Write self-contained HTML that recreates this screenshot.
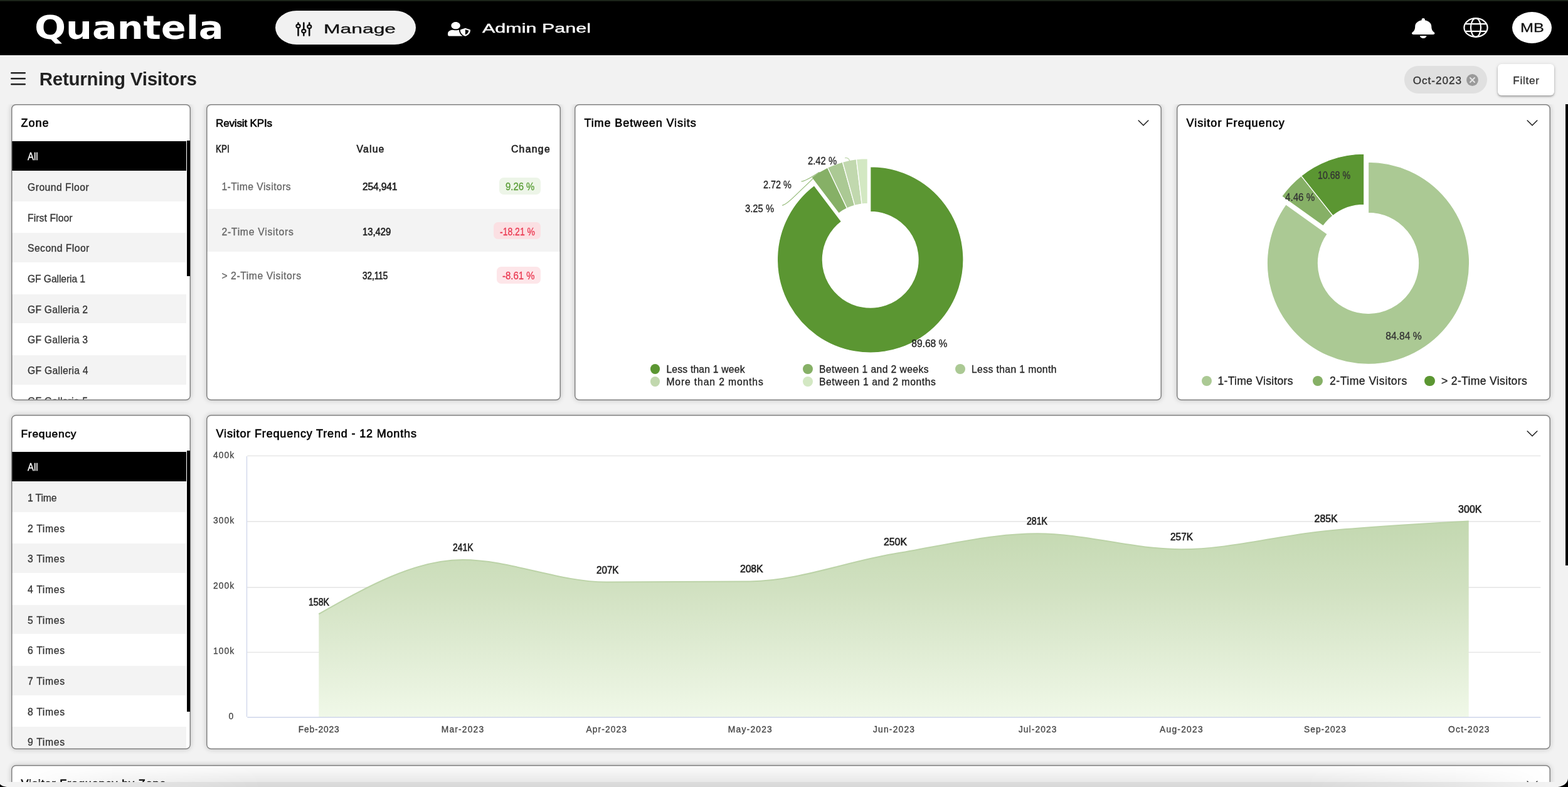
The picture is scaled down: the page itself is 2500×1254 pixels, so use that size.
<!DOCTYPE html>
<html lang="en">
<head>
<meta charset="utf-8">
<title>Returning Visitors</title>
<style>
html,body{margin:0;padding:0;overflow:hidden}
body{width:2500px;height:1254px;overflow:hidden;background:#f2f2f2;font-family:"Liberation Sans",sans-serif;color:#222;position:relative}
span,h1,h2,li,th,td,a,b,i{margin:0;padding:0}
.a,header span,header a,main h1,main h2,main span,main b,.toolbar svg{position:absolute;white-space:pre;line-height:1;margin:0;display:block}
header{position:absolute;left:0;top:0;width:2500px;height:88px;background:#000;border-top:2px solid #1b2419;box-sizing:border-box}
header svg,main svg{position:absolute;overflow:visible}
main{position:absolute;left:0;top:0;width:2500px;height:1254px;overflow:hidden}
header,main,.panel,.toolbar{will-change:transform}
.pill{position:absolute;left:439px;top:17px;width:224px;height:54px;background:#f1f1f1;border-radius:34px/27px}
.avatar{position:absolute;left:2411px;top:19px;width:63px;height:50px;background:#fff;border-radius:50%}
.chip{position:absolute;left:2239px;top:105px;width:132px;height:44px;background:#e0e0e0;border-radius:22px}
.btn{position:absolute;left:2388px;top:102px;width:90px;height:50px;background:#fff;border-radius:6px;box-shadow:0 2px 3px rgba(0,0,0,.28),0 1px 6px rgba(0,0,0,.12)}
.panel{position:absolute;background:#fff;border-radius:7.5px;box-shadow:0 0 9px rgba(0,0,0,.2);overflow:hidden}
.ring{position:absolute;display:block;border-radius:7.5px;box-shadow:inset 0 0 0 1.5px #808080;pointer-events:none}
.toolbar{position:absolute;left:0;top:88px;width:2500px;height:78px;background:#f2f2f2;z-index:2}
header{z-index:3}
.panel h2{font-weight:700}
ul{list-style:none;margin:0;padding:0;position:absolute;left:0;width:279.3px}
ul li{display:block;position:relative;height:46.7px;margin-bottom:2px;background:#fff}
ul li:nth-child(even){background:#f3f3f3}
ul li.sel{background:#000}
ul li span{position:absolute;white-space:pre;line-height:1}
.thumb{position:absolute;background:#000;width:5px}
.row{position:absolute;left:0;width:565px;height:69px}
.badge{position:absolute;border-radius:7px}
.dot{position:absolute;border-radius:50%}
.shade{background:linear-gradient(to bottom,rgba(0,0,0,0) 0,rgba(0,0,0,.015) 9px,rgba(0,0,0,.09) 34px,rgba(0,0,0,.105) 42px);-webkit-mask-image:linear-gradient(to right,transparent 30px,rgba(0,0,0,.5) 180px,#000 420px,#000 2080px,rgba(0,0,0,.5) 2320px,transparent 2470px);mask-image:linear-gradient(to right,transparent 30px,rgba(0,0,0,.5) 180px,#000 420px,#000 2080px,rgba(0,0,0,.5) 2320px,transparent 2470px)}
</style>
</head>
<body>
<header>
<span class="logo" style="left:54.6px;top:16.8px;font-size:51px;font-weight:700;font-family:'DejaVu Sans','Liberation Sans',sans-serif;color:#fff;transform:scaleX(1.1544);transform-origin:0 0;">Quantela</span>
<a class="pill" style="top:15px"></a>
<svg style="left:471px;top:33px" width="27" height="23" viewBox="0 0 27 23">
<g stroke="#111" stroke-width="2.6" stroke-linecap="round" fill="none">
<path d="M4.5 1.5V3.6M4.5 9.4V21.5M13.3 1.5V11.6M13.3 17.4V21.5M22.2 1.5V4.6M22.2 10.4V21.5"/>
<ellipse cx="4.5" cy="6.5" rx="3.1" ry="2.6" stroke-width="2.2"/>
<ellipse cx="13.3" cy="14.5" rx="3.1" ry="2.6" stroke-width="2.2"/>
<ellipse cx="22.2" cy="7.5" rx="3.1" ry="2.6" stroke-width="2.2"/>
</g></svg>
<span style="left:515.9px;top:33.6px;font-size:20.5px;color:#111;transform:scaleX(1.5534);transform-origin:0 0;-webkit-text-stroke:0.3px;">Manage</span>
<svg style="left:714px;top:33px" width="36" height="22.5" viewBox="0 0 640 512" preserveAspectRatio="none">
<path fill="#fff" d="M622.3 271.1l-115.2-45c-4.1-1.6-12.6-3.7-22.2 0l-115.2 45c-10.7 4.2-17.7 14-17.7 24.9 0 111.6 68.7 188.8 132.9 213.9 9.6 3.7 18 1.6 22.2 0C558.4 489.9 640 420.5 640 296c0-10.9-7-20.7-17.7-24.9zM496 462.4V273.3l95.5 37.3c-5.6 87.1-60.9 135.4-95.5 151.8zM224 256c70.7 0 128-57.3 128-128S294.7 0 224 0 96 57.3 96 128s57.3 128 128 128zm96 40c0-2.5.8-4.8 1.1-7.2-2.5-.1-4.9-.8-7.5-.8h-16.7c-22.2 10.2-46.9 16-72.9 16s-50.6-5.8-72.9-16h-16.7C60.2 288 0 348.2 0 422.4V464c0 26.5 21.5 48 48 48h352c6.8 0 13.3-1.5 19.2-4-54-42.9-99.2-116.7-99.2-212z"/></svg>
<span style="left:769.0px;top:33.1px;font-size:20.5px;color:#fff;transform:scaleX(1.4884);transform-origin:0 0;-webkit-text-stroke:0.35px #fff;">Admin Panel</span>
<svg style="left:2250.5px;top:27px" width="36.5" height="32" viewBox="0 0 448 512" preserveAspectRatio="none">
<path fill="#fff" d="M224 512c35.32 0 63.97-28.65 63.97-64H160.03c0 35.35 28.65 64 63.97 64zm215.39-149.71c-19.32-20.76-55.47-51.99-55.47-154.29 0-77.7-54.48-139.9-127.94-155.16V32c0-17.67-14.32-32-31.98-32s-31.98 14.33-31.98 32v20.84C118.56 68.1 64.08 130.3 64.08 208c0 102.3-36.15 133.53-55.47 154.29-6 6.45-8.66 14.16-8.61 21.71.11 16.4 12.98 32 32.1 32h383.8c19.12 0 32-15.6 32.1-32 .05-7.55-2.61-15.27-8.61-21.71z"/></svg>
<svg style="left:2332.5px;top:25.5px" width="40" height="32" viewBox="0 0 40 32">
<g fill="none" stroke="#fff" stroke-width="2.2">
<ellipse cx="20" cy="16" rx="18.6" ry="14.8"/>
<ellipse cx="20" cy="16" rx="8" ry="14.8"/>
<path d="M3.5 10.2H36.5M3.5 21.8H36.5"/>
</g></svg>
<a class="avatar" style="top:17px"></a>
<span style="left:2423.8px;top:31.0px;font-size:21px;color:#111;transform:scaleX(1.2000);transform-origin:0 0;-webkit-text-stroke:0.3px;">MB</span>
</header>
<main>
<div class="toolbar">
<svg style="left:17px;top:27px" width="24" height="21" viewBox="0 0 24 21"><path d="M1.2 1.2H22.8M1.2 10.2H22.8M1.2 19.2H22.8" stroke="#222" stroke-width="2.4" stroke-linecap="round" fill="none"/></svg>
<h1 style="left:62.8px;top:23.0px;font-size:29.5px;font-weight:700;color:#222;letter-spacing:-0.245px;">Returning Visitors</h1>
<div class="chip" style="top:17px"></div>
<span style="left:2252.7px;top:32.0px;font-size:17.2px;color:#333;letter-spacing:0.942px;-webkit-text-stroke:0.3px;">Oct-2023</span>
<svg style="left:2338px;top:29.700000000000003px" width="19" height="19" viewBox="0 0 19 19"><circle cx="9.5" cy="9.5" r="9.4" fill="#9a9a9a"/><path d="M6 6L13 13M13 6L6 13" stroke="#e4e4e4" stroke-width="2" stroke-linecap="round"/></svg>
<div class="btn" style="top:14px"></div>
<span style="left:2412.3px;top:32.0px;font-size:17.2px;color:#333;letter-spacing:0.679px;-webkit-text-stroke:0.3px;">Filter</span>
</div>
<section class="panel" id="zone" style="left:18px;top:166px;width:286px;height:472px">
<h2 style="left:15.5px;top:21.2px;font-size:18px;font-weight:400;color:#000;letter-spacing:0.990px;-webkit-text-stroke:0.6px;">Zone</h2>
<ul style="top:59.3px">
<li class="sel"><span style="left:26.0px;top:16.9px;font-size:15.7px;color:#fff;transform:scaleX(0.9462);transform-origin:0 0;-webkit-text-stroke:0.3px;">All</span></li>
<li><span style="left:26.0px;top:16.9px;font-size:15.7px;color:#333;letter-spacing:0.478px;-webkit-text-stroke:0.3px;">Ground Floor</span></li>
<li><span style="left:26.0px;top:16.9px;font-size:15.7px;color:#333;letter-spacing:0.091px;-webkit-text-stroke:0.3px;">First Floor</span></li>
<li><span style="left:26.0px;top:16.9px;font-size:15.7px;color:#333;letter-spacing:0.453px;-webkit-text-stroke:0.3px;">Second Floor</span></li>
<li><span style="left:26.0px;top:16.9px;font-size:15.7px;color:#333;letter-spacing:-0.108px;-webkit-text-stroke:0.3px;">GF Galleria 1</span></li>
<li><span style="left:26.0px;top:16.9px;font-size:15.7px;color:#333;letter-spacing:0.225px;-webkit-text-stroke:0.3px;">GF Galleria 2</span></li>
<li><span style="left:26.0px;top:16.9px;font-size:15.7px;color:#333;letter-spacing:0.225px;-webkit-text-stroke:0.3px;">GF Galleria 3</span></li>
<li><span style="left:26.0px;top:16.9px;font-size:15.7px;color:#333;letter-spacing:0.267px;-webkit-text-stroke:0.3px;">GF Galleria 4</span></li>
<li><span style="left:26.0px;top:16.9px;font-size:15.7px;color:#333;letter-spacing:0.225px;-webkit-text-stroke:0.3px;">GF Galleria 5</span></li>
</ul>
</section>
<i class="ring" style="left:18px;top:166px;width:286px;height:472px"></i>
<div class="thumb" style="left:298px;top:223.7px;height:216.2px"></div>
<section class="panel" id="kpis" style="left:329px;top:166px;width:565px;height:472px">
<h2 style="left:15.0px;top:22.0px;font-size:17px;font-weight:400;color:#000;letter-spacing:-0.149px;-webkit-text-stroke:0.6px;">Revisit KPIs</h2>
<span class="th" style="left:14.9px;top:63.9px;font-size:15.7px;color:#222;transform:scaleX(0.8578);transform-origin:0 0;-webkit-text-stroke:0.6px;">KPI</span>
<span class="th" style="left:239.6px;top:63.9px;font-size:15.7px;color:#222;letter-spacing:1.183px;-webkit-text-stroke:0.6px;">Value</span>
<span class="th" style="left:485.9px;top:63.9px;font-size:15.7px;color:#222;letter-spacing:1.369px;-webkit-text-stroke:0.6px;">Change</span>
<span style="left:24.4px;top:123.9px;font-size:15.7px;color:#666;letter-spacing:0.469px;-webkit-text-stroke:0.3px;">1-Time Visitors</span>
<span style="left:249.1px;top:123.9px;font-size:15.7px;color:#222;letter-spacing:-0.236px;-webkit-text-stroke:0.6px;">254,941</span>
<div class="badge" style="left:466.9px;top:116.6px;width:66.4px;height:27.3px;background:#edf5e8"></div>
<span style="left:477.2px;top:123.9px;font-size:15.7px;color:#5b9e38;transform:scaleX(0.9479);transform-origin:0 0;-webkit-text-stroke:0.3px;">9.26 %</span>
<div class="row" style="top:166.7px;height:68.6px;background:#f3f3f3"></div>
<span style="left:24.4px;top:195.5px;font-size:15.7px;color:#666;letter-spacing:0.762px;-webkit-text-stroke:0.3px;">2-Time Visitors</span>
<span style="left:249.1px;top:195.5px;font-size:15.7px;color:#222;transform:scaleX(0.9399);transform-origin:0 0;-webkit-text-stroke:0.6px;">13,429</span>
<div class="badge" style="left:458.2px;top:188.2px;width:75.1px;height:27.3px;background:#fbe0e3"></div>
<span style="left:467.5px;top:195.5px;font-size:15.7px;color:#ea3a52;transform:scaleX(0.8918);transform-origin:0 0;-webkit-text-stroke:0.3px;">-18.21 %</span>
<span style="left:24.4px;top:266.2px;font-size:15.7px;color:#666;letter-spacing:0.584px;-webkit-text-stroke:0.3px;">&gt; 2-Time Visitors</span>
<span style="left:249.1px;top:266.2px;font-size:15.7px;color:#222;transform:scaleX(0.8606);transform-origin:0 0;-webkit-text-stroke:0.6px;">32,115</span>
<div class="badge" style="left:462.8px;top:258.9px;width:70.5px;height:27.3px;background:#fde6e9"></div>
<span style="left:472.0px;top:266.2px;font-size:15.7px;color:#ea3a52;transform:scaleX(0.9523);transform-origin:0 0;-webkit-text-stroke:0.3px;">-8.61 %</span>
</section>
<i class="ring" style="left:329px;top:166px;width:565px;height:472px"></i>
<section class="panel" id="tbv" style="left:916px;top:166px;width:936px;height:472px">
<h2 style="left:15.5px;top:21.0px;font-size:18px;font-weight:400;color:#000;letter-spacing:0.897px;-webkit-text-stroke:0.6px;">Time Between Visits</h2>
<svg style="left:898px;top:25px" width="18" height="10" viewBox="0 0 18 10"><path d="M1.2 1L9 8.8L16.8 1" stroke="#222" stroke-width="1.6" fill="none" stroke-linecap="round" stroke-linejoin="round"/></svg>
<svg style="left:0;top:0" width="936" height="472" viewBox="0 0 936 472">
<path d="M471.70,99.50A148.3,148.3 0 1 1 382.14,129.60L425.62,186.99A76.3,76.3 0 1 0 471.70,171.50Z" fill="#5b9632" stroke="#fff" stroke-width="1.3" stroke-linejoin="round"/>
<path d="M377.77,116.61A148.3,148.3 0 0 1 403.60,100.91L434.55,165.92A76.3,76.3 0 0 0 421.26,174.00Z" fill="#86b066" stroke="#fff" stroke-width="1.3" stroke-linejoin="round"/>
<path d="M403.60,100.91A148.3,148.3 0 0 1 427.31,92.02L446.74,161.35A76.3,76.3 0 0 0 434.55,165.92Z" fill="#abc994" stroke="#fff" stroke-width="1.3" stroke-linejoin="round"/>
<path d="M427.31,92.02A148.3,148.3 0 0 1 449.40,87.60L458.11,159.07A76.3,76.3 0 0 0 446.74,161.35Z" fill="#c1d8ae" stroke="#fff" stroke-width="1.3" stroke-linejoin="round"/>
<path d="M449.40,87.60A148.3,148.3 0 0 1 467.34,86.51L467.34,158.51A76.3,76.3 0 0 0 458.11,159.07Z" fill="#d3e8c3" stroke="#fff" stroke-width="1.3" stroke-linejoin="round"/>
<g fill="none" stroke="#86b066" stroke-width="1.1" stroke-opacity=".9"><path d="M331.2,161.4Q338.0,159.5 352.0,145.6L380.4,118.4"/><path d="M361.4,123.0Q367.0,123.5 390.4,108.2"/><path d="M431.2,85.6Q437.0,85.0 438.6,90.0" stroke="#abc994"/></g>
</svg>
<span style="left:371.9px;top:83.1px;font-size:15.7px;color:#222;transform:scaleX(0.9438);transform-origin:0 0;-webkit-text-stroke:0.3px;">2.42 %</span>
<span style="left:300.8px;top:120.7px;font-size:15.7px;color:#222;transform:scaleX(0.9193);transform-origin:0 0;-webkit-text-stroke:0.3px;">2.72 %</span>
<span style="left:271.5px;top:158.5px;font-size:15.7px;color:#222;transform:scaleX(0.9438);transform-origin:0 0;-webkit-text-stroke:0.3px;">3.25 %</span>
<span style="left:537.2px;top:373.9px;font-size:15.7px;color:#222;letter-spacing:-0.030px;-webkit-text-stroke:0.3px;">89.68 %</span>
<i class="dot" style="left:120.5px;top:414.0px;width:15.8px;height:15.8px;background:#5b9632"></i>
<span style="left:146.4px;top:415.1px;font-size:15.7px;color:#222;letter-spacing:0.200px;-webkit-text-stroke:0.3px;">Less than 1 week</span>
<i class="dot" style="left:364.0px;top:414.0px;width:15.8px;height:15.8px;background:#86b066"></i>
<span style="left:389.9px;top:415.1px;font-size:15.7px;color:#222;letter-spacing:0.401px;-webkit-text-stroke:0.3px;">Between 1 and 2 weeks</span>
<i class="dot" style="left:607.0px;top:414.0px;width:15.8px;height:15.8px;background:#abc994"></i>
<span style="left:632.9px;top:415.1px;font-size:15.7px;color:#222;letter-spacing:0.408px;-webkit-text-stroke:0.3px;">Less than 1 month</span>
<i class="dot" style="left:120.5px;top:433.9px;width:15.8px;height:15.8px;background:#c1d8ae"></i>
<span style="left:146.4px;top:435.0px;font-size:15.7px;color:#222;letter-spacing:0.875px;-webkit-text-stroke:0.3px;">More than 2 months</span>
<i class="dot" style="left:364.0px;top:433.9px;width:15.8px;height:15.8px;background:#d3e8c3"></i>
<span style="left:389.9px;top:435.0px;font-size:15.7px;color:#222;letter-spacing:0.592px;-webkit-text-stroke:0.3px;">Between 1 and 2 months</span>
</section>
<i class="ring" style="left:916px;top:166px;width:936px;height:472px"></i>
<section class="panel" id="vf" style="left:1876px;top:166px;width:596px;height:472px">
<h2 style="left:15.5px;top:21.0px;font-size:18px;font-weight:400;color:#000;letter-spacing:1.035px;-webkit-text-stroke:0.6px;">Visitor Frequency</h2>
<svg style="left:557.5px;top:25px" width="18" height="10" viewBox="0 0 18 10"><path d="M1.2 1L9 8.8L16.8 1" stroke="#222" stroke-width="1.6" fill="none" stroke-linecap="round" stroke-linejoin="round"/></svg>
<svg style="left:0;top:0" width="596" height="472" viewBox="0 0 596 472">
<path d="M305.50,92.10A161.2,161.2 0 1 1 174.24,159.72L240.36,206.86A80,80 0 1 0 305.50,173.30Z" fill="#abc994" stroke="#fff" stroke-width="1.3" stroke-linejoin="round"/>
<path d="M167.60,146.83A161.2,161.2 0 0 1 198.61,114.18L249.11,177.76A80,80 0 0 0 233.72,193.97Z" fill="#86b066" stroke="#fff" stroke-width="1.3" stroke-linejoin="round"/>
<path d="M198.61,114.18A161.2,161.2 0 0 1 298.86,79.21L298.86,160.41A80,80 0 0 0 249.11,177.76Z" fill="#5b9632" stroke="#fff" stroke-width="1.3" stroke-linejoin="round"/>
</svg>
<span style="left:224.6px;top:105.7px;font-size:15.7px;color:#333;transform:scaleX(0.9031);transform-origin:0 0;-webkit-text-stroke:0.3px;">10.68 %</span>
<span style="left:172.6px;top:141.3px;font-size:15.7px;color:#333;transform:scaleX(0.9684);transform-origin:0 0;-webkit-text-stroke:0.3px;">4.46 %</span>
<span style="left:333.2px;top:361.7px;font-size:15.7px;color:#333;letter-spacing:-0.013px;-webkit-text-stroke:0.3px;">84.84 %</span>
<i class="dot" style="left:39.5px;top:432.5px;width:16.8px;height:16.8px;background:#abc994"></i>
<span style="left:65.5px;top:432.7px;font-size:17.6px;color:#222;letter-spacing:0.261px;-webkit-text-stroke:0.3px;">1-Time Visitors</span>
<i class="dot" style="left:216.6px;top:432.5px;width:16.8px;height:16.8px;background:#86b066"></i>
<span style="left:244.1px;top:432.7px;font-size:17.6px;color:#222;letter-spacing:0.483px;-webkit-text-stroke:0.3px;">2-Time Visitors</span>
<i class="dot" style="left:394.8px;top:432.5px;width:16.8px;height:16.8px;background:#5b9632"></i>
<span style="left:422.0px;top:432.7px;font-size:17.6px;color:#222;letter-spacing:0.325px;-webkit-text-stroke:0.3px;">&gt; 2-Time Visitors</span>
</section>
<i class="ring" style="left:1876px;top:166px;width:596px;height:472px"></i>
<section class="panel" id="freq" style="left:18px;top:661px;width:286px;height:533px">
<h2 style="left:15.5px;top:21.8px;font-size:17.3px;font-weight:400;color:#000;letter-spacing:0.793px;-webkit-text-stroke:0.6px;">Frequency</h2>
<ul style="top:59.3px">
<li class="sel"><span style="left:26.0px;top:16.9px;font-size:15.7px;color:#fff;transform:scaleX(0.9462);transform-origin:0 0;-webkit-text-stroke:0.3px;">All</span></li>
<li><span style="left:26.0px;top:16.9px;font-size:15.7px;color:#333;letter-spacing:-0.116px;-webkit-text-stroke:0.3px;">1 Time</span></li>
<li><span style="left:26.0px;top:16.9px;font-size:15.7px;color:#333;letter-spacing:0.680px;-webkit-text-stroke:0.3px;">2 Times</span></li>
<li><span style="left:26.0px;top:16.9px;font-size:15.7px;color:#333;letter-spacing:0.680px;-webkit-text-stroke:0.3px;">3 Times</span></li>
<li><span style="left:26.0px;top:16.9px;font-size:15.7px;color:#333;letter-spacing:0.680px;-webkit-text-stroke:0.3px;">4 Times</span></li>
<li><span style="left:26.0px;top:16.9px;font-size:15.7px;color:#333;letter-spacing:0.680px;-webkit-text-stroke:0.3px;">5 Times</span></li>
<li><span style="left:26.0px;top:16.9px;font-size:15.7px;color:#333;letter-spacing:0.680px;-webkit-text-stroke:0.3px;">6 Times</span></li>
<li><span style="left:26.0px;top:16.9px;font-size:15.7px;color:#333;letter-spacing:0.680px;-webkit-text-stroke:0.3px;">7 Times</span></li>
<li><span style="left:26.0px;top:16.9px;font-size:15.7px;color:#333;letter-spacing:0.680px;-webkit-text-stroke:0.3px;">8 Times</span></li>
<li><span style="left:26.0px;top:16.9px;font-size:15.7px;color:#333;letter-spacing:0.680px;-webkit-text-stroke:0.3px;">9 Times</span></li>
<li><span style="left:26.0px;top:16.9px;font-size:15.7px;color:#333;transform:scaleX(0.9269);transform-origin:0 0;-webkit-text-stroke:0.3px;">10 Times</span></li>
</ul>
</section>
<i class="ring" style="left:18px;top:661px;width:286px;height:533px"></i>
<div class="thumb" style="left:298px;top:718.4px;height:415.5px"></div>
<section class="panel" id="trend" style="left:329px;top:661px;width:2143px;height:533px">
<h2 style="left:15.6px;top:21.2px;font-size:18px;font-weight:400;color:#000;letter-spacing:0.838px;-webkit-text-stroke:0.6px;">Visitor Frequency Trend - 12 Months</h2>
<svg style="left:2104.5px;top:25px" width="18" height="10" viewBox="0 0 18 10"><path d="M1.2 1L9 8.8L16.8 1" stroke="#222" stroke-width="1.6" fill="none" stroke-linecap="round" stroke-linejoin="round"/></svg>
<svg style="left:0;top:0" width="2143" height="533" viewBox="0 0 2143 533">
<defs><linearGradient id="ag" x1="0" y1="0" x2="0" y2="1" gradientUnits="userSpaceOnUse" gradientTransform="translate(0 169.5) scale(1 312.5)"><stop offset="0" stop-color="#c3d8b0"/><stop offset=".35" stop-color="#d1e1c1"/><stop offset="1" stop-color="#f0f8e8"/></linearGradient></defs>
<path d="M65.3,378.4H2127.3M65.3,275.0H2127.3M65.3,170.0H2127.3M65.3,65.4H2127.3" stroke="#e3e3e3" stroke-width="1.3" fill="none"/>
<path d="M179.3,317.4C255.7,274.2 332.1,231.0 408.5,231.0C484.9,231.0 561.3,266.4 637.6,266.4C714.0,266.4 790.4,266.1 866.8,265.4C943.2,264.7 1019.6,234.3 1096.0,221.6C1172.4,209.0 1248.8,189.3 1325.2,189.3C1401.6,189.3 1478.0,214.3 1554.4,214.3C1630.7,214.3 1707.1,192.6 1783.5,185.2C1859.9,177.7 1936.3,173.6 2012.7,169.5L2012.7,482.0L179.3,482.0Z" fill="url(#ag)"/>
<path d="M179.3,317.4C255.7,274.2 332.1,231.0 408.5,231.0C484.9,231.0 561.3,266.4 637.6,266.4C714.0,266.4 790.4,266.1 866.8,265.4C943.2,264.7 1019.6,234.3 1096.0,221.6C1172.4,209.0 1248.8,189.3 1325.2,189.3C1401.6,189.3 1478.0,214.3 1554.4,214.3C1630.7,214.3 1707.1,192.6 1783.5,185.2C1859.9,177.7 1936.3,173.6 2012.7,169.5" stroke="#bcd3a8" stroke-width="2" fill="none"/>
<path d="M64.5,66.0V481.2M65.3,482.0H2127.3" stroke="#cdd5ea" stroke-width="1.3" fill="none"/>
</svg>
<span style="left:35.6px;top:473.5px;font-size:13.8px;color:#444;letter-spacing:0.812px;-webkit-text-stroke:0.3px;">0</span>
<span style="left:11.1px;top:369.7px;font-size:13.8px;color:#444;letter-spacing:1.026px;-webkit-text-stroke:0.3px;">100k</span>
<span style="left:11.1px;top:265.9px;font-size:13.8px;color:#444;letter-spacing:1.026px;-webkit-text-stroke:0.3px;">200k</span>
<span style="left:11.1px;top:162.1px;font-size:13.8px;color:#444;letter-spacing:1.026px;-webkit-text-stroke:0.3px;">300k</span>
<span style="left:11.1px;top:58.3px;font-size:13.8px;color:#444;letter-spacing:1.026px;-webkit-text-stroke:0.3px;">400k</span>
<span style="left:146.8px;top:494.5px;font-size:13.8px;color:#444;letter-spacing:0.848px;-webkit-text-stroke:0.3px;">Feb-2023</span>
<span style="left:374.7px;top:494.5px;font-size:13.8px;color:#444;letter-spacing:1.205px;-webkit-text-stroke:0.3px;">Mar-2023</span>
<span style="left:605.4px;top:494.5px;font-size:13.8px;color:#444;letter-spacing:1.105px;-webkit-text-stroke:0.3px;">Apr-2023</span>
<span style="left:831.8px;top:494.5px;font-size:13.8px;color:#444;letter-spacing:1.234px;-webkit-text-stroke:0.3px;">May-2023</span>
<span style="left:1063.0px;top:494.5px;font-size:13.8px;color:#444;letter-spacing:1.208px;-webkit-text-stroke:0.3px;">Jun-2023</span>
<span style="left:1294.9px;top:494.5px;font-size:13.8px;color:#444;letter-spacing:1.080px;-webkit-text-stroke:0.3px;">Jul-2023</span>
<span style="left:1520.1px;top:494.5px;font-size:13.8px;color:#444;letter-spacing:1.237px;-webkit-text-stroke:0.3px;">Aug-2023</span>
<span style="left:1750.0px;top:494.5px;font-size:13.8px;color:#444;letter-spacing:1.022px;-webkit-text-stroke:0.3px;">Sep-2023</span>
<span style="left:1980.0px;top:494.5px;font-size:13.8px;color:#444;letter-spacing:1.248px;-webkit-text-stroke:0.3px;">Oct-2023</span>
<span style="left:163.0px;top:290.5px;font-size:15.9px;color:#222;transform:scaleX(0.8889);transform-origin:0 0;-webkit-text-stroke:0.6px;">158K</span>
<span style="left:392.5px;top:204.0px;font-size:15.9px;color:#222;transform:scaleX(0.8754);transform-origin:0 0;-webkit-text-stroke:0.6px;">241K</span>
<span style="left:621.5px;top:239.5px;font-size:15.9px;color:#222;transform:scaleX(0.9562);transform-origin:0 0;-webkit-text-stroke:0.6px;">207K</span>
<span style="left:851.0px;top:238.4px;font-size:15.9px;color:#222;letter-spacing:-0.208px;-webkit-text-stroke:0.6px;">208K</span>
<span style="left:1080.0px;top:194.7px;font-size:15.9px;color:#222;letter-spacing:-0.042px;-webkit-text-stroke:0.6px;">250K</span>
<span style="left:1307.9px;top:162.4px;font-size:15.9px;color:#222;transform:scaleX(0.8889);transform-origin:0 0;-webkit-text-stroke:0.6px;">281K</span>
<span style="left:1537.3px;top:187.4px;font-size:15.9px;color:#222;transform:scaleX(0.9697);transform-origin:0 0;-webkit-text-stroke:0.6px;">257K</span>
<span style="left:1766.6px;top:158.2px;font-size:15.9px;color:#222;letter-spacing:-0.042px;-webkit-text-stroke:0.6px;">285K</span>
<span style="left:1996.1px;top:142.6px;font-size:15.9px;color:#222;letter-spacing:0.058px;-webkit-text-stroke:0.6px;">300K</span>
</section>
<i class="ring" style="left:329px;top:661px;width:2143px;height:533px"></i>
<section class="panel" id="byzone" style="left:18px;top:1219px;width:2454px;height:81px">
<h2 style="left:15.5px;top:21.1px;font-size:18px;font-weight:400;color:#000;letter-spacing:0.884px;-webkit-text-stroke:0.6px;">Visitor Frequency by Zone</h2>
<svg style="left:2415.5px;top:25px" width="18" height="10" viewBox="0 0 18 10"><path d="M1.2 1L9 8.8L16.8 1" stroke="#222" stroke-width="1.6" fill="none" stroke-linecap="round" stroke-linejoin="round"/></svg>
</section>
<i class="ring" style="left:18px;top:1219px;width:2454px;height:81px"></i>
<div class="thumb" style="left:2496px;top:166px;width:4px;height:735px"></div>
<div class="a" style="left:0;top:1246px;width:2500px;height:8px;background:#f2f2f2"></div>
<div class="a shade" style="left:0;top:1212px;width:2500px;height:42px"></div>
<svg style="left:0;top:1238px" width="2500" height="16" viewBox="0 0 2500 16"><path d="M0 11.5Q3 15 11 16H0Z" fill="#000"/><path d="M2500 2.5Q2499 13 2484 16H2500Z" fill="#000"/></svg>
</main>
</body>
</html>
